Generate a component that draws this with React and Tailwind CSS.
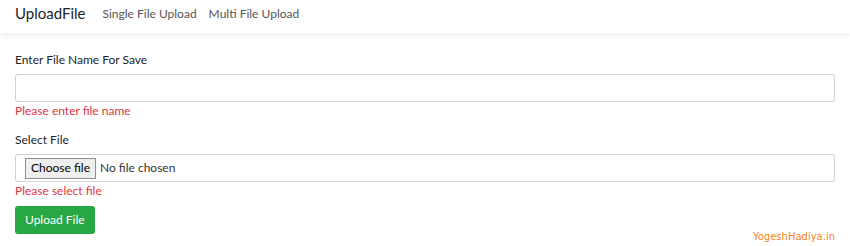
import React, { useState } from 'react'

const App = () => {
  const [fileName, setFileName] = useState('')

  return (
    <div className="relative min-h-[246px] bg-white text-[#212529]" style={{ fontFamily: 'Lato, "Open Sans", sans-serif' }}>
      {/* Navbar */}
      <nav className="flex h-[33px] items-center bg-white px-[15px] pb-[6px] shadow-[0_2px_6px_rgba(0,0,0,0.08)]">
        <span className="mr-[17px] text-[15px] text-[#212529]">UploadFile</span>
        <a className="mr-[12px] text-[12px] text-[#555]">Single File Upload</a>
        <a className="text-[12px] text-[#555]">Multi File Upload</a>
      </nav>

      {/* Form */}
      <div className="px-[15px] pt-[18px]">
        <label className="block text-[12px] leading-[18px]">Enter File Name For Save</label>
        <input
          type="text"
          value={fileName}
          onChange={(e) => setFileName(e.target.value)}
          className="mt-[5px] block h-[28px] w-full rounded-[3px] border border-[#ced4da] bg-white px-2 text-[12px] outline-none"
        />
        <p className="text-[12px] leading-[18px] text-[#dc3545]">Please enter file name</p>

        <label className="mt-[11px] block text-[12px] leading-[18px]">Select File</label>
        <div className="mt-[5px] flex h-[28px] w-full items-center rounded-[3px] border border-[#ced4da] bg-white pl-[9px]">
          <span className="flex h-[21px] items-center border border-[#8f8f8f] bg-[#efefef] px-[5px] text-[12px] text-black">Choose file</span>
          <span className="ml-[4px] text-[12px] text-[#333]">No file chosen</span>
        </div>
        <p className="text-[12px] leading-[18px] text-[#dc3545]">Please select file</p>

        <button className="mt-[6px] h-[28px] rounded-[3px] bg-[#28a745] px-[10px] text-[12px] text-white">
          Upload File
        </button>
      </div>

      <span className="absolute bottom-[2px] right-[15px] text-[10px] text-[#f7821b]" style={{ fontFamily: '"DejaVu Sans", sans-serif' }}>
        YogeshHadiya.in
      </span>
    </div>
  )
}

export default App
